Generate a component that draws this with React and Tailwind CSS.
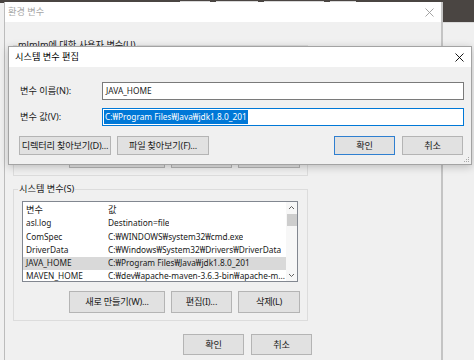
const rows = [
  ['asl.log', 'Destination=file'],
  ['ComSpec', 'C:₩WINDOWS₩system32₩cmd.exe'],
  ['DriverData', 'C:₩Windows₩System32₩Drivers₩DriverData'],
  ['JAVA_HOME', 'C:₩Program Files₩Java₩jdk1.8.0_201'],
  ['MAVEN_HOME', 'C:₩dev₩apache-maven-3.6.3-bin₩apache-m...'],
];

function CloseX({ color = '#000' }) {
  return (
    <svg width="9" height="9" viewBox="0 0 9 9" fill="none" stroke={color} strokeWidth="0.9">
      <path d="M0.5 0.5 8.5 8.5" />
      <path d="M8.5 0.5 0.5 8.5" />
    </svg>
  );
}

function Btn({ children, w = 'w-[61px]', h = 'h-[22px]', def = false }) {
  return (
    <div
      className={`${w} ${h} flex items-center justify-center whitespace-nowrap bg-[#e1e1e1] border text-[9.2px] tracking-[-0.2px] ${
        def ? 'border-[#2f7fd0]' : 'border-[#b4b4b4]'
      }`}
    >
      {children}
    </div>
  );
}

function ListBox({ children }) {
  return (
    <div className="w-[276px] h-[81px] mt-[6px] border border-[#828790] bg-white flex">
      {children}
    </div>
  );
}

function Chevron({ up }) {
  return (
    <svg width="7" height="5" viewBox="0 0 7 5" fill="none" stroke="#606060" strokeWidth="1">
      <path d={up ? 'M1 4 3.5 1.5 6 4' : 'M1 1 3.5 3.5 6 1'} />
    </svg>
  );
}

export default function App() {
  return (
    <div className="relative w-[474px] h-[360px] overflow-hidden bg-[#f0f0f0] text-[#1a1a1a] font-['Noto_Sans','Noto_Sans_CJK_KR',sans-serif]">
      {/* desktop behind */}
      <div className="absolute left-0 top-0 w-full h-[3px] bg-[#4a4542] flex items-end gap-[6px] pl-[180px]">
        <div className="w-[30px] h-[2px] bg-[#d8d8d8]" />
        <div className="w-[42px] h-[2px] bg-[#d8d8d8]" />
        <div className="w-[60px] h-[2px] bg-[#d8d8d8]" />
        <div className="w-[26px] h-[2px] bg-[#d8d8d8]" />
      </div>
      <div className="absolute left-[441px] top-0 w-[33px] h-[22px] bg-[#4a4542]" />
      <div className="absolute left-[443px] top-[22px] w-[31px] h-px bg-[#dadada]" />

      {/* back window: 환경 변수 */}
      <div className="absolute left-[4px] top-[2px] w-[439px] h-[370px] bg-[#f0f0f0] border-l border-[#bcbcbc] border-r-2 border-r-[#c4c4c4]">
        <div className="h-[20px] bg-white flex items-center justify-between pl-[3px] pr-[7px]">
          <span className="text-[9.2px] text-[#a6a6a6]">환경 변수</span>
          <CloseX color="#9a9a9a" />
        </div>
        <div className="pl-[8px]">
          <fieldset className="mt-[17px] w-[295px] border border-[#dcdcdc] pl-[8px] pr-[7px] pb-[7px]">
            <legend className="ml-[-5px] px-[1px] text-[9.2px] leading-[12px]">mlmlm에 대한 사용자 변수(U)</legend>
            <div className="mt-[5px] w-[276px] h-[81px] border border-[#828790] bg-white" />
            <div className="mt-[9px] flex justify-end gap-[6px]">
              <Btn w="w-[96px]">새로 만들기(W)...</Btn>
              <Btn>편집(I)...</Btn>
              <Btn w="w-[62px]">삭제(L)</Btn>
            </div>
          </fieldset>

          <fieldset className="mt-[7px] w-[295px] border border-[#dcdcdc] pl-[8px] pr-[7px] pb-[7px]">
            <legend className="ml-[-4px] px-[1px] text-[9.2px] leading-[12px]">시스템 변수(S)</legend>
            <ListBox>
              <div className="flex-1 min-w-0 pt-px">
                <div className="h-[14px] flex items-center text-[9.2px]">
                  <span className="w-[85px] pl-[3px] shrink-0">변수</span>
                  <span>값</span>
                </div>
                {rows.map(([name, value]) => (
                  <div
                    key={name}
                    className={`h-[13.25px] flex items-center text-[8.3px] ${
                      name === 'JAVA_HOME' ? 'bg-[#d9d9d9]' : ''
                    }`}
                  >
                    <span className="w-[85px] pl-[3px] shrink-0 truncate">{name}</span>
                    <span className="truncate whitespace-nowrap">{value}</span>
                  </div>
                ))}
              </div>
              <div className="w-[11px] bg-[#f7f7f7] flex flex-col items-center">
                <div className="h-[11px] flex items-center">
                  <Chevron up />
                </div>
                <div className="mt-px w-[10px] h-[12px] bg-[#cdcdcd]" />
                <div className="flex-1" />
                <div className="h-[11px] flex items-center">
                  <Chevron />
                </div>
              </div>
            </ListBox>
            <div className="mt-[9px] flex justify-end gap-[6px]">
              <Btn w="w-[96px]">새로 만들기(W)...</Btn>
              <Btn>편집(I)...</Btn>
              <Btn w="w-[62px]">삭제(L)</Btn>
            </div>
          </fieldset>

          <div className="mt-[13px] w-[299px] flex justify-end gap-[7px]">
            <Btn h="h-[21px]">확인</Btn>
            <Btn h="h-[21px]">취소</Btn>
          </div>
        </div>
      </div>

      {/* front dialog: 시스템 변수 편집 */}
      <div className="absolute left-[8px] top-[46px] w-[464px] h-[119px] bg-[#f0f0f0] border border-[#a3a3a3] shadow-[0_2px_8px_rgba(0,0,0,0.22)] flex flex-col">
        <div className="h-[20px] shrink-0 bg-white flex items-center justify-between pl-[6px] pr-[7px]">
          <span className="text-[9.2px] text-black">시스템 변수 편집</span>
          <CloseX />
        </div>
        <div className="pl-[10px] pr-[7px] pt-[15px]">
          <div className="h-[18px] flex items-center">
            <span className="w-[83px] pl-px text-[9.2px] shrink-0">변수 이름(N):</span>
            <div className="w-[362px] h-[18px] bg-white border border-[#7a7a7a] flex items-center pl-[3px] text-[8.3px]">
              JAVA_HOME
            </div>
          </div>
          <div className="mt-[8px] h-[18px] flex items-center">
            <span className="w-[83px] pl-px text-[9.2px] shrink-0">변수 값(V):</span>
            <div className="w-[362px] h-[18px] bg-white border border-[#0078d7] flex items-center pl-px">
              <span className="h-[14px] leading-[14px] px-px bg-[#0078d7] text-white text-[8.3px] whitespace-nowrap">
                C:₩Program Files₩Java₩jdk1.8.0_201
              </span>
            </div>
          </div>
          <div className="mt-[10px] flex justify-between">
            <div className="flex gap-[6px]">
              <Btn w="w-[92px]" h="h-[19px]">디렉터리 찾아보기(D)...</Btn>
              <Btn w="w-[92px]" h="h-[19px]">파일 찾아보기(F)...</Btn>
            </div>
            <div className="flex gap-[7px] mr-px">
              <Btn h="h-[19px]" def>확인</Btn>
              <Btn h="h-[19px]">취소</Btn>
            </div>
          </div>
        </div>
        <svg className="absolute right-[1px] bottom-[1px]" width="7" height="7" viewBox="0 0 7 7" fill="#a8a8a8">
          <rect x="5" y="1" width="1" height="1" />
          <rect x="5" y="3" width="1" height="1" />
          <rect x="3" y="3" width="1" height="1" />
          <rect x="5" y="5" width="1" height="1" />
          <rect x="3" y="5" width="1" height="1" />
          <rect x="1" y="5" width="1" height="1" />
        </svg>
      </div>
    </div>
  );
}
